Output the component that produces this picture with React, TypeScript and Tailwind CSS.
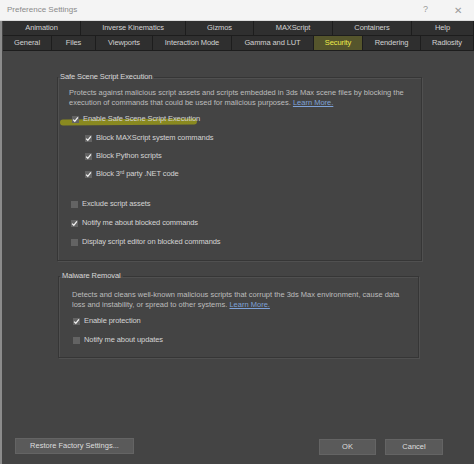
import React from "react";

const FONT = { fontFamily: '"Liberation Sans", Arial, sans-serif' };

function Check({ checked }: { checked?: boolean }) {
  return (
    <span className="w-[7px] h-[7px] bg-[#636363] flex items-center justify-center shrink-0">
      {checked && (
        <svg width="7" height="7" viewBox="0 0 7 7">
          <path d="M1.1 3.6 L2.8 5.3 L5.9 1.4" stroke="#f2f2f2" strokeWidth="1.3" fill="none" />
        </svg>
      )}
    </span>
  );
}

function Row({ checked, children, className = "" }: { checked?: boolean; children: React.ReactNode; className?: string }) {
  return (
    <div className={`flex items-center h-[12px] gap-[4px] text-[7.5px] tracking-[-0.1px] leading-[12px] text-[#d4d4d4] ${className}`}>
      <Check checked={checked} />
      <span className="whitespace-nowrap">{children}</span>
    </div>
  );
}

const row1 = [
  ["Animation", 78],
  ["Inverse Kinematics", 105],
  ["Gizmos", 68],
  ["MAXScript", 79],
  ["Containers", 79],
  ["Help", 62],
] as const;

const row2 = [
  ["General", 49],
  ["Files", 44],
  ["Viewports", 57],
  ["Interaction Mode", 79],
  ["Gamma and LUT", 82],
  ["Security", 49],
  ["Rendering", 58],
  ["Radiosity", 53],
] as const;

function TabRow({ tabs }: { tabs: readonly (readonly [string, number])[] }) {
  return (
    <div className="flex h-[15px] border-b border-[#1d1d1d]">
      {tabs.map(([name, w]) => {
        const sel = name === "Security";
        return (
          <div
            key={name}
            style={{ width: w }}
            className={`shrink-0 flex items-center justify-center border-r border-[#1d1d1d] text-[7.5px] tracking-[-0.1px] leading-[14px] ${
              sel ? "bg-[#55552c] text-[#ecea4a]" : "bg-[#2f2f2f] text-[#d2d2d2]"
            }`}
          >
            {name}
          </div>
        );
      })}
    </div>
  );
}

const desc = "text-[7.5px] leading-[10px] text-[#bdbdbd] whitespace-nowrap";

export default function App() {
  return (
    <div className="w-[474px] h-[464px] bg-[#444444] flex flex-col overflow-hidden" style={FONT}>
      {/* title bar */}
      <div className="h-[21px] bg-[#f4f4f4] flex items-center pl-[7px] pr-[12px] border-b border-[#dcdcdc] shrink-0">
        <span className="text-[8px] text-[#8a8a8a]">Preference Settings</span>
        <span className="ml-auto text-[9px] text-[#9a9a9a] mr-[26px]">?</span>
        <span className="text-[10px] text-[#9a9a9a]">✕</span>
      </div>

      <div className="flex-1 flex flex-col border-l-2 border-[#8c8c8c] pl-[1px]">
        <TabRow tabs={row1} />
        <TabRow tabs={row2} />

        <div className="flex-1 flex flex-col">
          {/* group 1 */}
          <fieldset className="relative ml-[54px] w-[365px] mt-[21px] border border-[#363636] shadow-[1px_1px_0_#505050,inset_1px_1px_0_#505050] px-[11px] pt-[6px] pb-[12px]">
            <legend className="text-[7.5px] tracking-[-0.1px] leading-[10px] text-[#d8d8d8] ml-[-11px] px-[2px]">Safe Scene Script Execution</legend>
            <div className={desc}>
              Protects against malicious script assets and scripts embedded in 3ds Max scene files by blocking the
              <br />
              execution of commands that could be used for malicious purposes.{" "}
              <span className="text-[#7ea2d8] underline">Learn More.</span>
            </div>
            <div className="relative mt-[5px] ml-[3px]">
              <div className="absolute left-[-12px] top-[6px] w-[137px] h-[6px] bg-[#a0a014] opacity-75 rounded-[3px] -rotate-[0.4deg]" />
              <Row checked className="relative">Enable Safe Scene Script Execution</Row>
            </div>
            <div className="ml-[16px] flex flex-col gap-[6px] mt-[7px]">
              <Row checked>Block MAXScript system commands</Row>
              <Row checked>Block Python scripts</Row>
              <Row checked>
                Block 3<sup className="text-[5px]">rd</sup> party .NET code
              </Row>
            </div>
            <div className="ml-[2px] flex flex-col gap-[7px] mt-[18px]">
              <Row>Exclude script assets</Row>
              <Row checked>Notify me about blocked commands</Row>
              <Row>Display script editor on blocked commands</Row>
            </div>
          </fieldset>

          {/* group 2 */}
          <fieldset className="ml-[55px] w-[361px] mt-[10px] border border-[#363636] shadow-[1px_1px_0_#505050,inset_1px_1px_0_#505050] px-[14px] pt-[9px] pb-[11px]">
            <legend className="text-[7.5px] tracking-[-0.1px] leading-[10px] text-[#d8d8d8] ml-[-13px] px-[2px]">Malware Removal</legend>
            <div className={`${desc} ml-[-1px]`}>
              Detects and cleans well-known malicious scripts that corrupt the 3ds Max environment, cause data
              <br />
              loss and instability, or spread to other systems.{" "}
              <span className="text-[#7ea2d8] underline">Learn More.</span>
            </div>
            <div className="flex flex-col gap-[7px] mt-[5px]">
              <Row checked>Enable protection</Row>
              <Row>Notify me about updates</Row>
            </div>
          </fieldset>

          <div className="flex-1" />

          {/* buttons */}
          <div className="flex items-end pl-[12px] pb-[9px]">
            <div className="w-[119px] h-[16px] bg-[#5a5a5a] border border-[#646464] flex items-center justify-center text-[7.5px] text-[#dedede] mb-[1px]">
              Restore Factory Settings...
            </div>
            <div className="ml-auto w-[57px] h-[16px] bg-[#5a5a5a] border border-[#646464] flex items-center justify-center text-[7.5px] text-[#dedede]">
              OK
            </div>
            <div className="ml-[9px] mr-[31px] w-[58px] h-[16px] bg-[#5a5a5a] border border-[#646464] flex items-center justify-center text-[7.5px] text-[#dedede]">
              Cancel
            </div>
          </div>
        </div>
      </div>
    </div>
  );
}
